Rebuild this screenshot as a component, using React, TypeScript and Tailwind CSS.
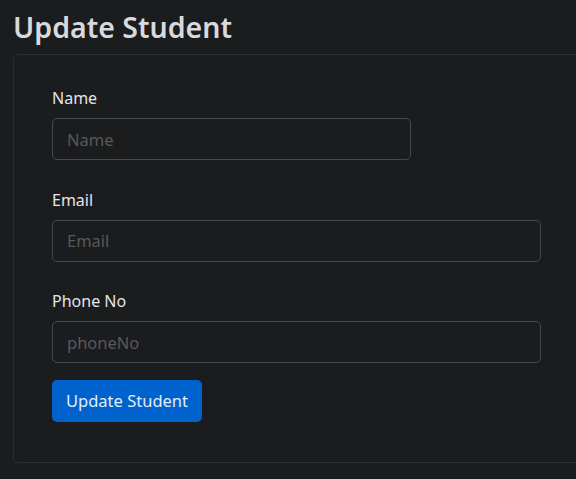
import { useState } from "react";

type Field = {
  id: string;
  label: string;
  placeholder: string;
  width: string;
};

const fields: Field[] = [
  { id: "name", label: "Name", placeholder: "Name", width: "w-[359px]" },
  { id: "email", label: "Email", placeholder: "Email", width: "w-full" },
  { id: "phoneNo", label: "Phone No", placeholder: "phoneNo", width: "w-full" },
];

export default function App() {
  const [values, setValues] = useState<Record<string, string>>({ name: "", email: "", phoneNo: "" });

  return (
    <div className="h-[479px] w-[576px] overflow-hidden bg-[#1b1c1e] font-['Noto_Sans',sans-serif] text-[#dee2e6]">
      <h1 className="pl-[13px] pt-[7px] text-[28.5px] font-semibold leading-[40px] text-[#d7d9dc]">Update Student</h1>

      <form
        className="ml-[13px] mt-[7px] w-[567px] rounded-[5px] border border-[#2c2d30] px-[38px] pb-[40px] pt-[31px]"
        onSubmit={(e) => e.preventDefault()}
      >
        {fields.map((field) => (
          <div key={field.id} className="mb-[27.5px]">
            <label htmlFor={field.id} className="mb-2 block text-[16px] leading-6 text-[#e3e5e8]">
              {field.label}
            </label>
            <input
              id={field.id}
              type="text"
              placeholder={field.placeholder}
              value={values[field.id]}
              onChange={(e) => setValues({ ...values, [field.id]: e.target.value })}
              className={`${field.width} h-[42px] rounded-[5px] border border-[#46484b] bg-transparent px-[14px] text-[16.5px] text-[#dee2e6] outline-none placeholder:text-[#58595b]`}
            />
          </div>
        ))}

        <button
          type="submit"
          className="-mt-[10.5px] block h-[42px] rounded-[5px] bg-[#0063cd] px-[14px] text-[16.5px] text-[#e4ecf7]"
        >
          Update Student
        </button>
      </form>
    </div>
  );
}
